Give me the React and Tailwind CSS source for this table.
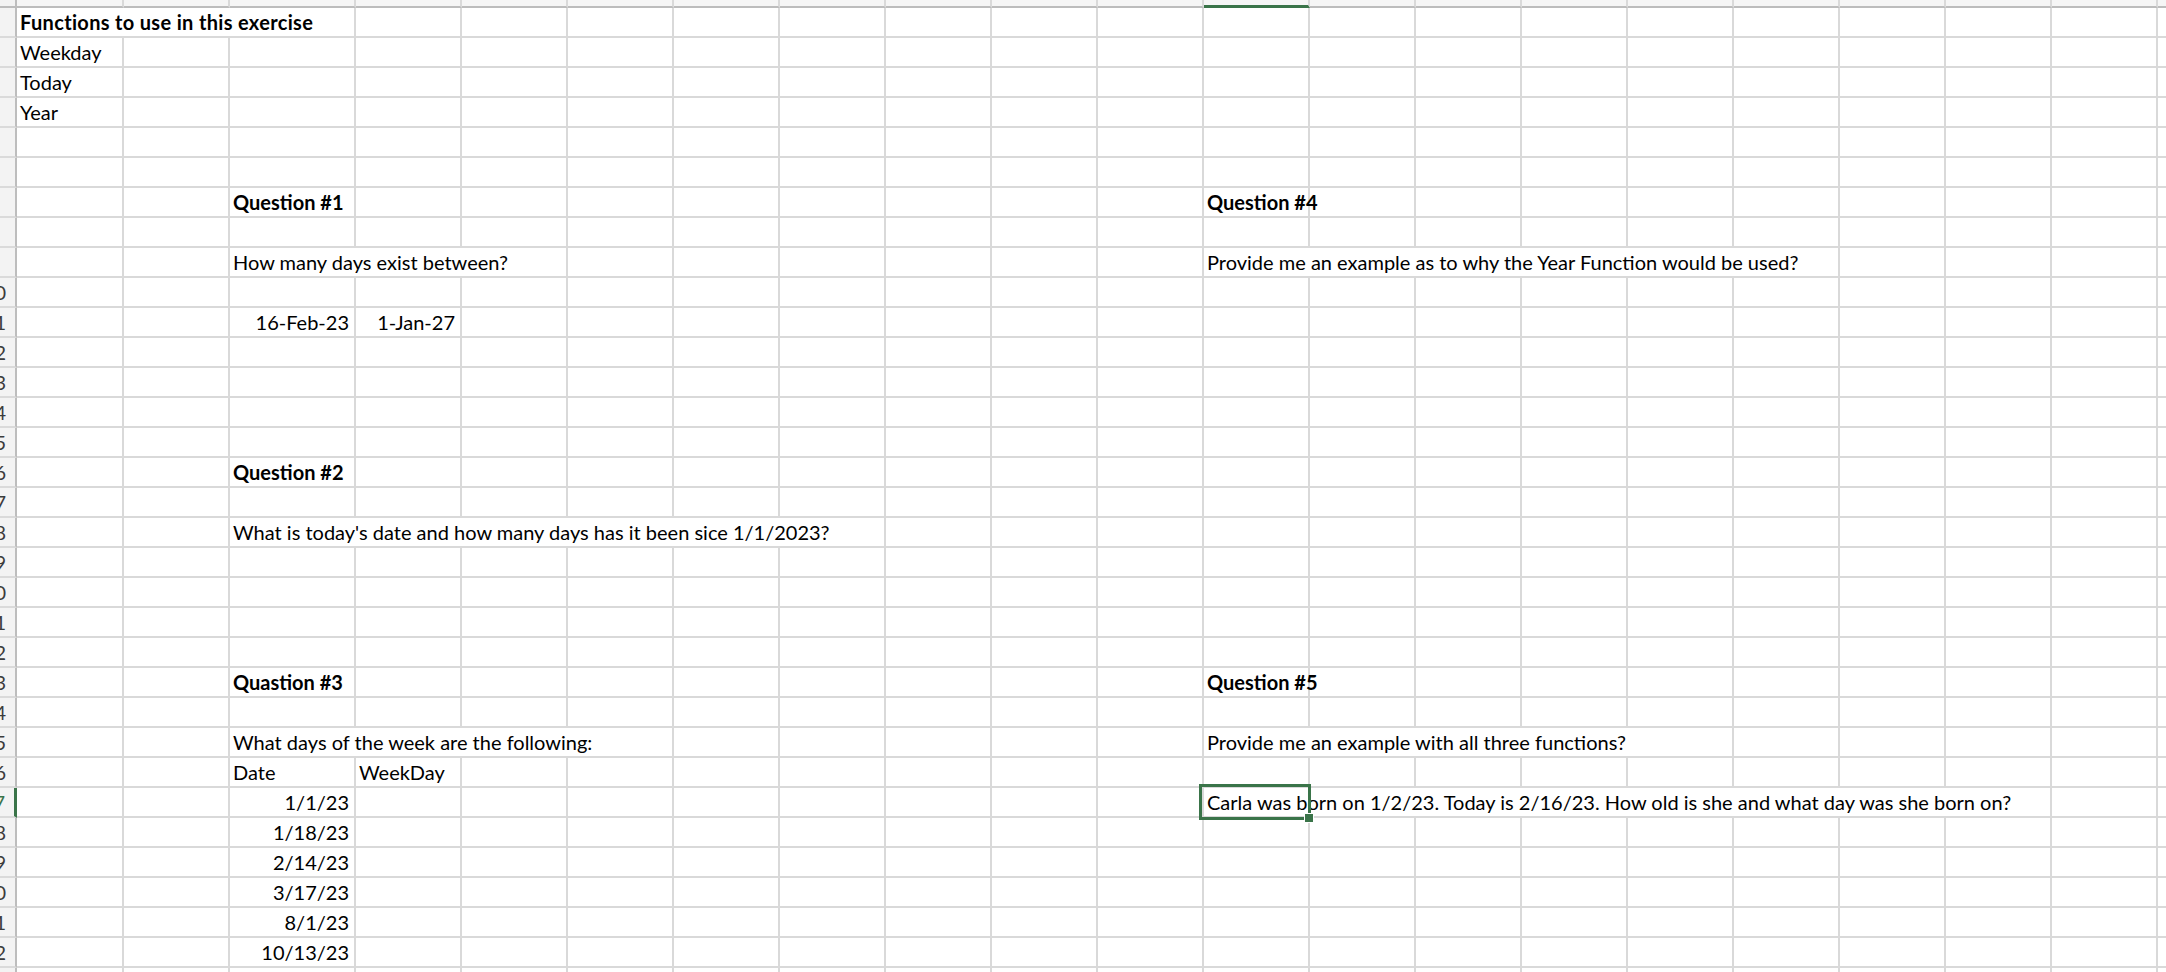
import React from "react";

const NCOLS = 21;
const GRID = "grid grid-cols-[17px_107px_106px_126px_repeat(18,106px)]";
const SPAN = {
  1: "col-span-1",
  2: "col-span-2",
  3: "col-span-3",
  4: "col-span-4",
  5: "col-span-5",
  6: "col-span-6",
  7: "col-span-7",
  8: "col-span-8",
};

const DATA = {
  1: [{ c: 0, span: 3, t: "Functions to use in this exercise", b: true, wide: true }],
  2: [{ c: 0, t: "Weekday" }],
  3: [{ c: 0, t: "Today" }],
  4: [{ c: 0, t: "Year" }],
  7: [
    { c: 2, t: "Question #1", b: true },
    { c: 11, t: "Question #4", b: true },
  ],
  9: [
    { c: 2, span: 3, t: "How many days exist between?" },
    { c: 11, span: 6, t: "Provide me an example as to why the Year Function would be used?" },
  ],
  11: [
    { c: 2, t: "16-Feb-23", r: true },
    { c: 3, t: "1-Jan-27", r: true },
  ],
  16: [{ c: 2, t: "Question #2", b: true }],
  18: [{ c: 2, span: 6, t: "What is today's date and how many days has it been sice 1/1/2023?" }],
  23: [
    { c: 2, t: "Quastion #3", b: true },
    { c: 11, t: "Question #5", b: true },
  ],
  25: [
    { c: 2, span: 4, t: "What days of the week are the following:" },
    { c: 11, span: 5, t: "Provide me an example with all three functions?" },
  ],
  26: [
    { c: 2, t: "Date" },
    { c: 3, t: "WeekDay" },
  ],
  27: [
    { c: 2, t: "1/1/23", r: true },
    {
      c: 11,
      span: 8,
      t: "Carla was born on 1/2/23. Today is 2/16/23. How old is she and what day was she born on?",
      sel: true,
    },
  ],
  28: [{ c: 2, t: "1/18/23", r: true }],
  29: [{ c: 2, t: "2/14/23", r: true }],
  30: [{ c: 2, t: "3/17/23", r: true }],
  31: [{ c: 2, t: "8/1/23", r: true }],
  32: [{ c: 2, t: "10/13/23", r: true }],
};

function Row({ n }) {
  const cells = DATA[n] || [];
  const out = [];
  let c = 0;
  while (c < NCOLS) {
    const cell = cells.find((x) => x.c === c);
    if (cell) {
      const span = cell.span || 1;
      out.push(
        <div
          key={c}
          className={`${SPAN[span]} relative h-[30px] border-r-2 border-b-2 border-[#d9d9d9] flex items-end pb-[4px] whitespace-nowrap text-black ${
            cell.r ? "justify-end pr-[5px]" : "justify-start pl-[3px]"
          } ${cell.b ? "font-bold" : ""} ${cell.wide ? "tracking-[0.33px]" : ""}`}
        >
          <span className="leading-none">{cell.t}</span>
          {cell.sel && (
            <div className="absolute left-[-5px] top-[-4px] w-[112px] h-[36px] border-[3px] border-[#3a7449]">
              <div className="absolute right-[-6px] bottom-[-6px] w-[10px] h-[10px] bg-[#3a7449] border border-white" />
            </div>
          )}
        </div>
      );
      c += span;
    } else {
      out.push(
        <div key={c} className="h-[30px] border-r-2 border-b-2 border-[#d9d9d9]" />
      );
      c += 1;
    }
  }
  const active = n === 27;
  return (
    <div className={GRID}>
      <div
        className={`h-[30px] overflow-hidden bg-[#f3f3f3] border-b-2 border-b-[#dadada] flex justify-end items-end pr-[9px] pb-[4px] ${
          active ? "border-r-[3px] border-r-[#3a7449] text-[#3a7449]" : "border-r-2 border-r-[#bdbdbd] text-[#3c3c3c]"
        }`}
      >
        {n >= 10 && <span className="leading-none whitespace-nowrap">{n}</span>}
      </div>
      {out}
    </div>
  );
}

export default function App() {
  const rows = [];
  for (let i = 1; i <= 33; i++) rows.push(<Row key={i} n={i} />);
  const headers = [];
  for (let i = 0; i < NCOLS; i++) {
    headers.push(
      <div
        key={i}
        className={`h-[8px] border-r-2 border-r-[#d9d9d9] ${
          i === 11 ? "border-b-[3px] border-b-[#3a7449]" : "border-b-2 border-b-[#bcbcbc]"
        }`}
      />
    );
  }
  return (
    <div className="w-[2166px] h-[972px] overflow-hidden bg-white font-['Lato','Liberation_Sans',sans-serif] text-[20px]">
      <div className={`${GRID} bg-[#f5f5f5]`}>
        <div className="h-[8px] bg-[#f3f3f3] border-r-2 border-r-[#bdbdbd] border-b-2 border-b-[#bcbcbc]" />
        {headers}
      </div>
      {rows}
    </div>
  );
}
